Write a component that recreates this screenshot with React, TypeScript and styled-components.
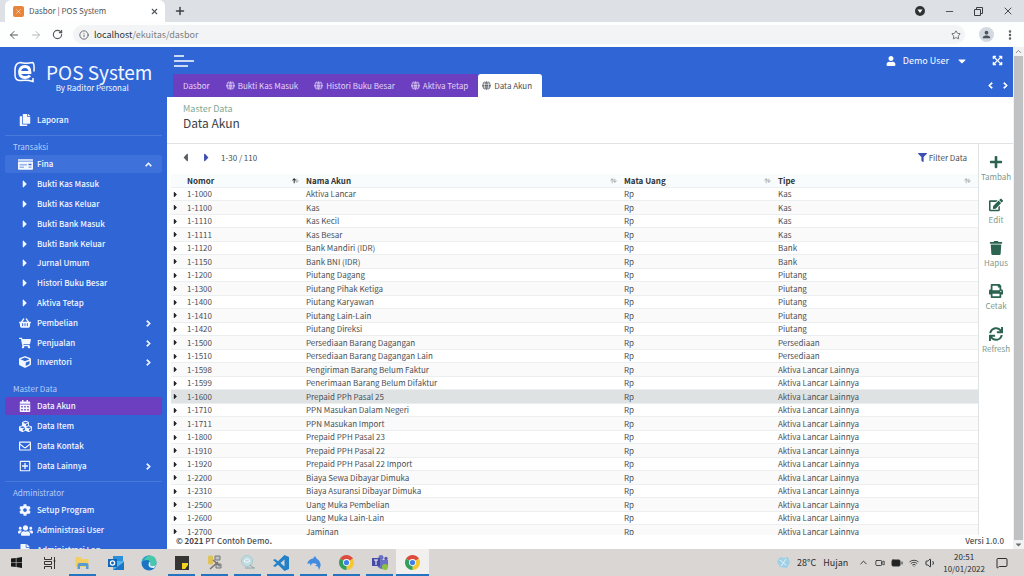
import React from 'react';
import styled, { createGlobalStyle, css } from 'styled-components';
import type { IconType } from 'react-icons';
import {
  FaCalendarAlt, FaCaretDown, FaCaretLeft, FaCaretRight, FaChevronLeft, FaChevronRight, FaChevronUp,
  FaCog, FaCopy, FaCube, FaCubes, FaEdit, FaFileAlt, FaFilter, FaGlobe, FaMoneyCheck, FaPlus, FaPrint,
  FaRegEnvelope, FaRegPlusSquare, FaShoppingBasket, FaShoppingCart, FaTrash, FaUser, FaUsers, FaSync,
  FaExpandArrowsAlt,
} from 'react-icons/fa';
import { ArrowLeft, ArrowRight, RotateCw, Info, Star, X, Plus, Minus, EllipsisVertical, ChevronUp,
  Wifi, Volume1, MessageSquare, BatteryFull, Video } from 'lucide-react';
import { MdPerson } from 'react-icons/md';

const blue = '#3065d6';
const purple = '#6c3fc0';
const green = '#2b6350';

const GlobalStyle = createGlobalStyle`
  *, *::before, *::after { box-sizing: border-box; }
  body {
    margin: 0;
    font-family: "Noto Sans CJK SC", "Noto Sans", sans-serif;
    font-size: 8px;
    line-height: 12px;
    color: #4a4f55;
  }
  button, input { font: inherit; color: inherit; background: none; border: 0; padding: 0; margin: 0; }
  a { color: inherit; text-decoration: none; }
  svg { display: block; flex: none; }
`;

const Screen = styled.div`
  display: flex;
  flex-direction: column;
  height: 100vh;
  overflow: hidden;
`;

/* Browser frame */
const TabStrip = styled.div`
  display: flex;
  align-items: center;
  height: 22px;
  padding-left: 5px;
  background: #dde1e5;
  flex: none;
`;
const BrowserTab = styled.div`
  display: flex;
  align-items: center;
  gap: 5px;
  width: 160px;
  height: 22px;
  padding: 0 6px 0 8px;
  border-radius: 6px 6px 0 0;
  background: #fff;
  color: #505458;
  span { flex: 1; }
`;
const Favicon = styled.i`
  display: grid;
  place-items: center;
  width: 11px;
  height: 11px;
  border-radius: 2px;
  background: #e8853a;
  color: #fff;
`;
const IconButton = styled.button`
  display: grid;
  place-items: center;
`;
const NewTab = styled(IconButton)`
  margin-left: 8px;
  width: 14px;
  color: #3c4043;
`;
const WindowButtons = styled.div`
  display: flex;
  align-items: center;
  gap: 19px;
  margin-left: auto;
  padding-right: 10px;
  color: #45484c;
`;
const AddressRow = styled.div`
  display: flex;
  align-items: center;
  gap: 10px;
  height: 25px;
  padding: 0 8px;
  background: #fdfefe;
  color: #55595d;
  flex: none;
`;
const AddressBox = styled.div`
  display: flex;
  align-items: center;
  gap: 5px;
  flex: 1;
  height: 19px;
  padding: 0 4px 0 6px;
  border-radius: 10px;
  background: #f2f4f5;
`;
const Url = styled.div`
  flex: 1;
  font-size: 9px;
  color: #7a7e82;
  b { font-weight: 400; color: #303438; }
`;
const Avatar = styled(IconButton)`
  width: 15px;
  height: 15px;
  margin-left: 4px;
  border-radius: 50%;
  background: #d3d9e0;
  color: #4b5258;
`;

/* Application */
const AppBody = styled.div`
  display: flex;
  flex: 1;
  min-height: 0;
  background: #fff;
`;
const Sidebar = styled.nav`
  width: 167px;
  flex: none;
  padding: 0 5px;
  overflow: hidden;
  background: ${blue};
  color: #f3f7ff;
`;
const Brand = styled.header`
  display: flex;
  gap: 10px;
  height: 64px;
  padding: 14px 0 0 9px;
`;
const BrandText = styled.div`
  text-align: center;
  strong {
    display: block;
    font-size: 19px;
    line-height: 22px;
    font-weight: 400;
  }
  small { display: block; padding-right: 14px; font-size: 8px; line-height: 9px; }
`;
const Section = styled.h2<{ $ruled?: boolean }>`
  margin: 0;
  padding: 5px 0 0 8px;
  height: 20px;
  font-size: 8px;
  line-height: 12px;
  font-weight: 400;
  color: #b9cdf6;
  border-top: 1px solid ${p => (p.$ruled ? '#4a79dc' : 'transparent')};
`;
const MenuList = styled.ul`
  margin: 0;
  padding: 0 0 4px;
  list-style: none;
  li { padding-bottom: 2px; }
  li:nth-child(5n) { padding-bottom: 1px; }
`;
const MenuLink = styled.a<{ $tone?: 'open' | 'active' }>`
  display: grid;
  grid-template-columns: 20px 1fr 8px;
  align-items: center;
  column-gap: 2px;
  height: 18px;
  padding: 0 9px 0 10px;
  border-radius: 2px;
  font-weight: 500;
  svg:first-child { justify-self: center; }
  span + svg { stroke: currentColor; stroke-width: 50px; }
  ${p => p.$tone === 'open' && css`background: #3f71da;`}
  ${p => p.$tone === 'active' && css`background: ${purple};`}
`;

const Main = styled.main`
  display: flex;
  flex-direction: column;
  flex: 1;
  min-width: 0;
`;
const TopBar = styled.div`
  display: flex;
  align-items: center;
  height: 27px;
  padding: 0 10px 0 6px;
  background: ${blue};
  color: #fff;
  flex: none;
`;
const UserButton = styled.button`
  display: flex;
  align-items: center;
  gap: 7px;
  margin-left: auto;
  margin-right: 24px;
  font-size: 9px;
`;
const TabBar = styled.div`
  display: flex;
  height: 23px;
  padding: 0 4px 0 6px;
  background: ${blue};
  color: #fff;
  flex: none;
`;
const PageTab = styled.button<{ $active?: boolean; $home?: boolean }>`
  display: flex;
  align-items: center;
  gap: 3px;
  padding: 0 10px 0 ${p => (p.$active ? 4 : p.$home ? 10 : 6)}px;
  border-radius: ${p => (p.$active ? '3px 3px 0 0' : '0')};
  background: ${p => (p.$active ? '#fff' : purple)};
  color: ${p => (p.$active ? '#4a4f55' : '#e3d6f7')};
  svg { opacity: 0.85; }
`;
const TabArrows = styled.div`
  display: flex;
  align-items: center;
  gap: 8px;
  margin-left: auto;
  svg { stroke: currentColor; stroke-width: 50px; }
`;
const Heading = styled.div`
  height: 47px;
  padding: 5px 16px;
  border-bottom: 1px solid #dfe3e6;
  flex: none;
  p { margin: 0; font-size: 9px; line-height: 13px; color: #7fa894; }
  h1 { margin: 0; font-size: 12px; line-height: 15px; font-weight: 400; color: #3c4146; }
`;
const Workspace = styled.div`
  display: flex;
  flex: 1;
  min-height: 0;
`;
const Panel = styled.section`
  display: flex;
  flex-direction: column;
  flex: 1;
  min-width: 0;
  overflow: hidden;
  padding-left: 4px;
  border-right: 1px solid #dfe3e6;
`;
const Pager = styled.div`
  display: flex;
  align-items: center;
  gap: 8px;
  height: 30px;
  padding: 0 11px 3px 8px;
  flex: none;
`;
const FilterButton = styled.button`
  display: flex;
  align-items: center;
  gap: 2px;
  margin-left: auto;
  svg { color: #3c4fb0; }
`;
const Grid = styled.table`
  width: 100%;
  table-layout: fixed;
  border-collapse: separate;
  border-spacing: 0;
  th, td {
    height: 14px;
    padding: 0;
    font-size: 8px;
    line-height: 12px;
    text-align: left;
    white-space: nowrap;
    border-bottom: 1px solid #eceff0;
  }
  th { color: #30353a; background: #f9fcfc; }
  tbody tr:nth-child(odd) td { height: 13px; }
  tbody tr:nth-child(even) td { background: #fafafa; }
`;
const Col = styled.col<{ $w?: number }>`
  width: ${p => (p.$w ? `${p.$w}px` : 'auto')};
`;
const Row = styled.tr<{ $hover?: boolean }>`
  ${p => p.$hover && css`&&& td, tbody &:nth-child(even) td { background: #dfe2e2; }`}
`;
const HeadCell = styled.div`
  display: flex;
  align-items: center;
  justify-content: space-between;
  padding-right: 7px;
`;
const ToolColumn = styled.aside`
  display: flex;
  flex-direction: column;
  align-items: center;
  gap: 13px;
  width: 34px;
  padding-top: 11px;
  flex: none;
`;
const Tool = styled.button`
  display: flex;
  flex-direction: column;
  align-items: center;
  gap: 2px;
  height: 30px;
  color: #7b9a8f;
  svg { color: ${green}; }
`;
const Footer = styled.footer`
  display: flex;
  justify-content: space-between;
  height: 14px;
  padding: 0 9px;
  flex: none;
  font-weight: 500;
  b { color: #3f4449; }
`;
const ScrollTrack = styled.div`
  display: flex;
  flex-direction: column;
  align-items: center;
  width: 11px;
  flex: none;
  background: #f1f2f2;
  color: #6a6d70;
`;
const ScrollThumb = styled.div`
  flex: 1;
  width: 9px;
  background: #bfc1c2;
`;

/* Task bar */
const TaskBar = styled.div`
  display: flex;
  align-items: center;
  height: 27px;
  background: #d9d6d4;
  color: #2c2d2f;
  flex: none;
`;
const Task = styled.button<{ $running?: boolean; $active?: boolean }>`
  display: grid;
  place-items: center;
  width: ${p => (p.$active ? 33 : 27)}px;
  height: 27px;
  margin: 0 ${p => (p.$active ? 0 : 3)}px;
  background: ${p => (p.$active ? '#f1f0ef' : 'none')};
  box-shadow: ${p => (p.$running ? 'inset 0 -2px #2474c0' : 'none')};
`;
const Tray = styled.div`
  display: flex;
  align-items: center;
  gap: 6px;
  margin-left: auto;
  padding-right: 16px;
`;
const Weather = styled.div`
  display: flex;
  align-items: center;
  gap: 7px;
  font-size: 9px;
  margin-right: 4px;
`;
const Clock = styled.time`
  text-align: center;
  line-height: 12px;
  margin-right: 5px;
`;

type Item = { icon: IconType; label: string; size?: number; more?: boolean; tone?: 'open' | 'active' };
const sub = (label: string): Item => ({ icon: FaCaretRight, label, size: 12 });

const transaksi: Item[] = [
  { icon: FaMoneyCheck, label: 'Fina', size: 15, tone: 'open' },
  sub('Bukti Kas Masuk'), sub('Bukti Kas Keluar'), sub('Bukti Bank Masuk'), sub('Bukti Bank Keluar'),
  sub('Jurnal Umum'), sub('Histori Buku Besar'), sub('Aktiva Tetap'),
  { icon: FaShoppingBasket, label: 'Pembelian', more: true },
  { icon: FaShoppingCart, label: 'Penjualan', more: true },
  { icon: FaCube, label: 'Inventori', more: true },
];
const master: Item[] = [
  { icon: FaCalendarAlt, label: 'Data Akun', tone: 'active' },
  { icon: FaCubes, label: 'Data Item', size: 13 },
  { icon: FaRegEnvelope, label: 'Data Kontak' },
  { icon: FaRegPlusSquare, label: 'Data Lainnya', more: true },
];
const admin: Item[] = [
  { icon: FaCog, label: 'Setup Program' },
  { icon: FaUsers, label: 'Administrasi User', size: 15 },
  { icon: FaFileAlt, label: 'Administrasi Lap' },
];

const accounts: [string, string, string][] = [
  ['1-1000', 'Aktiva Lancar', 'Kas'], ['1-1100', 'Kas', 'Kas'], ['1-1110', 'Kas Kecil', 'Kas'],
  ['1-1111', 'Kas Besar', 'Kas'], ['1-1120', 'Bank Mandiri (IDR)', 'Bank'], ['1-1150', 'Bank BNI (IDR)', 'Bank'],
  ['1-1200', 'Piutang Dagang', 'Piutang'], ['1-1300', 'Piutang Pihak Ketiga', 'Piutang'],
  ['1-1400', 'Piutang Karyawan', 'Piutang'], ['1-1410', 'Piutang Lain-Lain', 'Piutang'],
  ['1-1420', 'Piutang Direksi', 'Piutang'], ['1-1500', 'Persediaan Barang Dagangan', 'Persediaan'],
  ['1-1510', 'Persediaan Barang Dagangan Lain', 'Persediaan'],
  ['1-1598', 'Pengiriman Barang Belum Faktur', 'Aktiva Lancar Lainnya'],
  ['1-1599', 'Penerimaan Barang Belum Difaktur', 'Aktiva Lancar Lainnya'],
  ['1-1600', 'Prepaid PPh Pasal 25', 'Aktiva Lancar Lainnya'],
  ['1-1710', 'PPN Masukan Dalam Negeri', 'Aktiva Lancar Lainnya'],
  ['1-1711', 'PPN Masukan Import', 'Aktiva Lancar Lainnya'],
  ['1-1800', 'Prepaid PPH Pasal 23', 'Aktiva Lancar Lainnya'],
  ['1-1910', 'Prepaid PPH Pasal 22', 'Aktiva Lancar Lainnya'],
  ['1-1920', 'Prepaid PPH Pasal 22 Import', 'Aktiva Lancar Lainnya'],
  ['1-2200', 'Biaya Sewa Dibayar Dimuka', 'Aktiva Lancar Lainnya'],
  ['1-2310', 'Biaya Asuransi Dibayar Dimuka', 'Aktiva Lancar Lainnya'],
  ['1-2500', 'Uang Muka Pembelian', 'Aktiva Lancar Lainnya'],
  ['1-2600', 'Uang Muka Lain-Lain', 'Aktiva Lancar Lainnya'],
  ['1-2700', 'Jaminan', 'Aktiva Lancar Lainnya'],
];

const tools: [IconType, string][] = [
  [FaPlus, 'Tambah'], [FaEdit, 'Edit'], [FaTrash, 'Hapus'], [FaPrint, 'Cetak'], [FaSync, 'Refresh'],
];

function Menu({ items }: { items: Item[] }) {
  return (
    <MenuList>
      {items.map(({ icon: Icon, label, size = 12, more, tone }) => (
        <li key={label}>
          <MenuLink href="#" $tone={tone}>
            <Icon size={size} />
            <span>{label}</span>
            {more && <FaChevronRight size={7} />}
            {tone === 'open' && <FaChevronUp size={7} />}
          </MenuLink>
        </li>
      ))}
    </MenuList>
  );
}

function Logo() {
  return (
    <svg width="22" height="22" viewBox="0 0 22 22" fill="none" stroke="#fff">
      <path d="M19 1.500Q11 3 6.500 1.500 1 2 1 9v5q0 6 6 5.500 6-1 12 1V17M19 1.500q1.500 2 1 9" strokeWidth="1.500" />
      <path d="M5.500 11.500h10.500q0-6-5-6t-5.500 5.500q0 5.500 5.500 5.500 3.500 0 5-2" strokeWidth="2.800" />
    </svg>
  );
}

function SortMark({ active }: { active?: boolean }) {
  return (
    <svg width="7" height="7" viewBox="0 0 8 8" fill="none" strokeWidth="1.200">
      <path d="M2.500 7V2M0.500 4l2-2 2 2" stroke={active ? '#30353a' : '#b4b9bc'} />
      <path d="M5.500 2v4M4 4.500l1.500 1.500L7.500 4" stroke="#b4b9bc" />
    </svg>
  );
}

function Chrome() {
  return (
    <svg width="15" height="15" viewBox="0 0 20 20">
      <path d="M10 10L1.340 5A10 10 0 0 1 18.660 5z" fill="#dd4b3e" />
      <path d="M10 10L18.660 5A10 10 0 0 1 10 20z" fill="#f6c830" />
      <path d="M10 10V20A10 10 0 0 1 1.340 5z" fill="#32a05a" />
      <circle cx="10" cy="10" r="4.600" fill="#fff" />
      <circle cx="10" cy="10" r="3.500" fill="#4080e8" />
    </svg>
  );
}

const taskIcons: { name: string; running?: boolean; active?: boolean; art: React.ReactNode }[] = [
  { name: 'Start', art: <svg width="11" height="11" viewBox="0 0 11 11"><path d="M0 1.500L4.800 1v4.200H0zM5.400 .9L11 0v5.200H5.400zM0 5.800h4.800V10L0 9.500zM5.400 5.800H11V11l-5.600-.9z" fill="#17191b" /></svg> },
  { name: 'Task view', art: <svg width="12" height="12" viewBox="0 0 12 12" fill="none" stroke="#333"><path d="M.5 0v2.500h7V0M.5 12V9.500h7V12M.5 4.500h7v3h-7zM10.500 0v12M9.500 4h2" /></svg> },
  { name: 'Explorer', running: true, art: <svg width="15" height="14" viewBox="0 0 14 14"><path d="M0 1h5l1 2h7v8H0z" fill="#f4ce62" /><path d="M2 13V9q0-2 2-2h7q2 0 2 2v4h-2.500v-3h-6v3z" fill="#579bd5" /></svg> },
  { name: 'Outlook', art: <svg width="16" height="14" viewBox="0 0 16 14"><path d="M5 0h10v6H5z" fill="#2b8fdc" /><path d="M5 5h11v9H5z" fill="#53b4ec" /><path d="M5 14l11-8v8z" fill="#1b75c4" /><path d="M0 3h9v8H0z" fill="#1167b5" /><circle cx="4.500" cy="7" r="2.100" fill="none" stroke="#fff" strokeWidth="1.300" /></svg> },
  { name: 'Edge', art: <svg width="16" height="16" viewBox="0 0 16 16"><circle cx="8" cy="8" r="7.500" fill="#1b74c4" /><path d="M.6 7Q2 .5 8.500.5T15.500 7q0 4-4 4-3 0-2-2.500Q9 5 6 5 2 5 .6 7z" fill="#46c9a8" /><path d="M.6 7Q2 1 7 .7 4 3 3 5.500z" fill="#2a9fd8" /><path d="M9.500 8.500Q8.500 11 11.500 11q2.500 0 3.600-1.500-.5 2-2.100 3.500-5 .5-5.500-3Q7.500 7 9 6.500z" fill="#d9eef3" /></svg> },
  { name: 'Notes', running: true, art: <svg width="14" height="14" viewBox="0 0 14 14"><path d="M0 0h14v14H0z" fill="#353534" /><path d="M7 7h6v2l-3 4H7z" fill="#f2d324" /></svg> },
  { name: 'Database tools', running: true, art: <svg width="15" height="15" viewBox="0 0 15 15"><path d="M1 1q3-1 5 0v8q-2 1-5 0z" fill="#dfc45a" /><path d="M8 1h5v4H8zM9 9h5v4H9z" fill="#bfc3c6" stroke="#77797b" /><path d="M3 14l8-7M6 5l7 6" stroke="#77716a" strokeWidth="1.500" /></svg> },
  { name: 'Search tool', running: true, art: <svg width="16" height="15" viewBox="0 0 16 15" fill="none"><circle cx="7" cy="6" r="5.500" fill="#c3dde2" stroke="#a3c8ce" /><path d="M4 6q3-4 6 0-3 3-6 0z" stroke="#eef6f7" /><path d="M5 13h10M10 10l4 3" stroke="#8aa6aa" /></svg> },
  { name: 'Code editor', running: true, art: <svg width="16" height="16" viewBox="0 0 16 16"><path d="M11.500 0L16 2v12l-4.500 2L5 9.700 2 12 0 11l3.500-3L0 5l2-1 3 2.300zM11.500 4.500L7.500 8l4 3.500z" fill="#2481c8" fillRule="evenodd" /></svg> },
  { name: 'Dolphin', running: true, art: <svg width="14" height="14" viewBox="0 0 14 14"><path d="M0 7.500Q2 3 6 2.500L8 0l1.500 2.500Q14 5 13.500 10L12 14l-1-3.500L8 10l2-1.500Q8 6.500 5 7.500L3.500 10 3 7.500z" fill="#438be0" /></svg> },
  { name: 'Chrome', running: true, art: <Chrome /> },
  { name: 'Teams', running: true, art: <svg width="16" height="15" viewBox="0 0 16 15"><circle cx="9" cy="2.500" r="2.500" fill="#6970c4" /><circle cx="14" cy="3.500" r="1.700" fill="#5359af" /><path d="M5 5h11v6q-2 3-5 3-5 0-6-4z" fill="#6970c4" /><path d="M0 3h8v8H0z" fill="#454ba5" /><path d="M2 5h4M4 5v5" stroke="#fff" /><circle cx="13" cy="12" r="3" fill="#8ac23f" /></svg> },
  { name: 'Chrome window', running: true, active: true, art: <Chrome /> },
];

export default function App() {
  return (
    <Screen>
      <GlobalStyle />
      <TabStrip>
        <BrowserTab>
          <Favicon><X size={7} /></Favicon>
          <span>Dasbor | POS System</span>
          <IconButton aria-label="Close tab"><X size={9} strokeWidth={3} /></IconButton>
        </BrowserTab>
        <NewTab aria-label="New tab"><Plus size={12} strokeWidth={3} /></NewTab>
        <WindowButtons>
          <IconButton aria-label="Tab search">
            <svg width="10" height="10" viewBox="0 0 10 10"><circle cx="5" cy="5" r="5" fill="#303336" /><path d="M2.500 3.500h5L5 7z" fill="#fff" /></svg>
          </IconButton>
          <IconButton aria-label="Minimize"><Minus size={11} /></IconButton>
          <IconButton aria-label="Restore">
            <svg width="9" height="9" viewBox="0 0 9 9" fill="none" stroke="#3c4043"><path d="M.5 2.500h6v6h-6zM2.500 2V.5h6v6H7" /></svg>
          </IconButton>
          <IconButton aria-label="Close"><X size={12} /></IconButton>
        </WindowButtons>
      </TabStrip>
      <AddressRow>
        <IconButton aria-label="Back"><ArrowLeft size={12} /></IconButton>
        <IconButton aria-label="Forward"><ArrowRight size={12} color="#b5b8ba" /></IconButton>
        <IconButton aria-label="Reload"><RotateCw size={11} strokeWidth={2.5} /></IconButton>
        <AddressBox>
          <Info size={10} />
          <Url><b>localhost</b>/ekuitas/dasbor</Url>
          <Star size={10} />
        </AddressBox>
        <Avatar aria-label="Profile"><MdPerson size={11} /></Avatar>
        <IconButton aria-label="Browser menu"><EllipsisVertical size={12} strokeWidth={3} /></IconButton>
      </AddressRow>

      <AppBody>
        <Sidebar>
          <Brand>
            <Logo />
            <BrandText><strong>POS System</strong><small>By Raditor Personal</small></BrandText>
          </Brand>
          <Menu items={[{ icon: FaCopy, label: 'Laporan' }]} />
          <Section $ruled>Transaksi</Section>
          <Menu items={transaksi} />
          <Section>Master Data</Section>
          <Menu items={master} />
          <Section $ruled>Administrator</Section>
          <Menu items={admin} />
        </Sidebar>

        <Main>
          <TopBar>
            <IconButton aria-label="Toggle menu">
              <svg width="21" height="12" viewBox="0 0 21 12" stroke="#fff" strokeWidth="1.300"><path d="M1 1h10M1 6h20M1 11h14" /></svg>
            </IconButton>
            <UserButton><FaUser size={10} /><span>Demo User</span><FaCaretDown size={12} /></UserButton>
            <IconButton aria-label="Full screen"><FaExpandArrowsAlt size={11} /></IconButton>
          </TopBar>
          <TabBar>
            <PageTab $home>Dasbor</PageTab>
            {['Bukti Kas Masuk', 'Histori Buku Besar', 'Aktiva Tetap'].map(t => (
              <PageTab key={t}><FaGlobe size={9} />{t}</PageTab>
            ))}
            <PageTab $active><FaGlobe size={9} />Data Akun</PageTab>
            <TabArrows>
              <IconButton aria-label="Previous tab"><FaChevronLeft size={7} /></IconButton>
              <IconButton aria-label="Next tab"><FaChevronRight size={7} /></IconButton>
            </TabArrows>
          </TabBar>
          <Heading><p>Master Data</p><h1>Data Akun</h1></Heading>
          <Workspace>
            <Panel>
              <Pager>
                <IconButton aria-label="Previous page"><FaCaretLeft size={13} color="#5a5f63" /></IconButton>
                <IconButton aria-label="Next page"><FaCaretRight size={13} color="#3c4fb0" /></IconButton>
                <span>1-30 / 110</span>
                <FilterButton><FaFilter size={9} />Filter Data</FilterButton>
              </Pager>
              <Grid>
                <colgroup><Col $w={16} /><Col $w={119} /><Col /><Col $w={154} /><Col $w={200} /></colgroup>
                <thead>
                  <tr>
                    <th />
                    {['Nomor', 'Nama Akun', 'Mata Uang', 'Tipe'].map((h, i) => (
                      <th key={h}><HeadCell>{h}<SortMark active={i === 0} /></HeadCell></th>
                    ))}
                  </tr>
                </thead>
                <tbody>
                  {accounts.map(([no, name, type]) => (
                    <Row key={no} $hover={no === '1-1600'}>
                      <td><FaCaretRight size={9} color="#222" /></td>
                      <td>{no}</td><td>{name}</td><td>Rp</td><td>{type}</td>
                    </Row>
                  ))}
                </tbody>
              </Grid>
            </Panel>
            <ToolColumn>
              {tools.map(([Icon, label]) => <Tool key={label}><Icon size={14} />{label}</Tool>)}
            </ToolColumn>
          </Workspace>
          <Footer><span><b>© 2021</b> PT Contoh Demo<b>.</b></span><span>Versi 1.0.0</span></Footer>
        </Main>
        <ScrollTrack><ChevronUp size={9} /><ScrollThumb /><FaCaretDown size={9} /></ScrollTrack>
      </AppBody>

      <TaskBar>
        {taskIcons.map(t => (
          <Task key={t.name} aria-label={t.name} $running={t.running} $active={t.active}>{t.art}</Task>
        ))}
        <Tray>
          <Weather>
            <svg width="13" height="13" viewBox="0 0 13 13"><path d="M3 1l4 1 4-1 2 5-3 6-7-1-3-5z" fill="#9fd0e6" /><path d="M3 4l6 5M9 3L4 10" stroke="#e4f3fa" /></svg>
            <span>28°C</span><span>Hujan</span>
          </Weather>
          <ChevronUp size={11} /><Video size={10} /><BatteryFull size={12} fill="#222" /><Wifi size={10} /><Volume1 size={12} />
          <Clock>20:51<br />10/01/2022</Clock>
          <MessageSquare size={12} />
        </Tray>
      </TaskBar>
    </Screen>
  );
}
